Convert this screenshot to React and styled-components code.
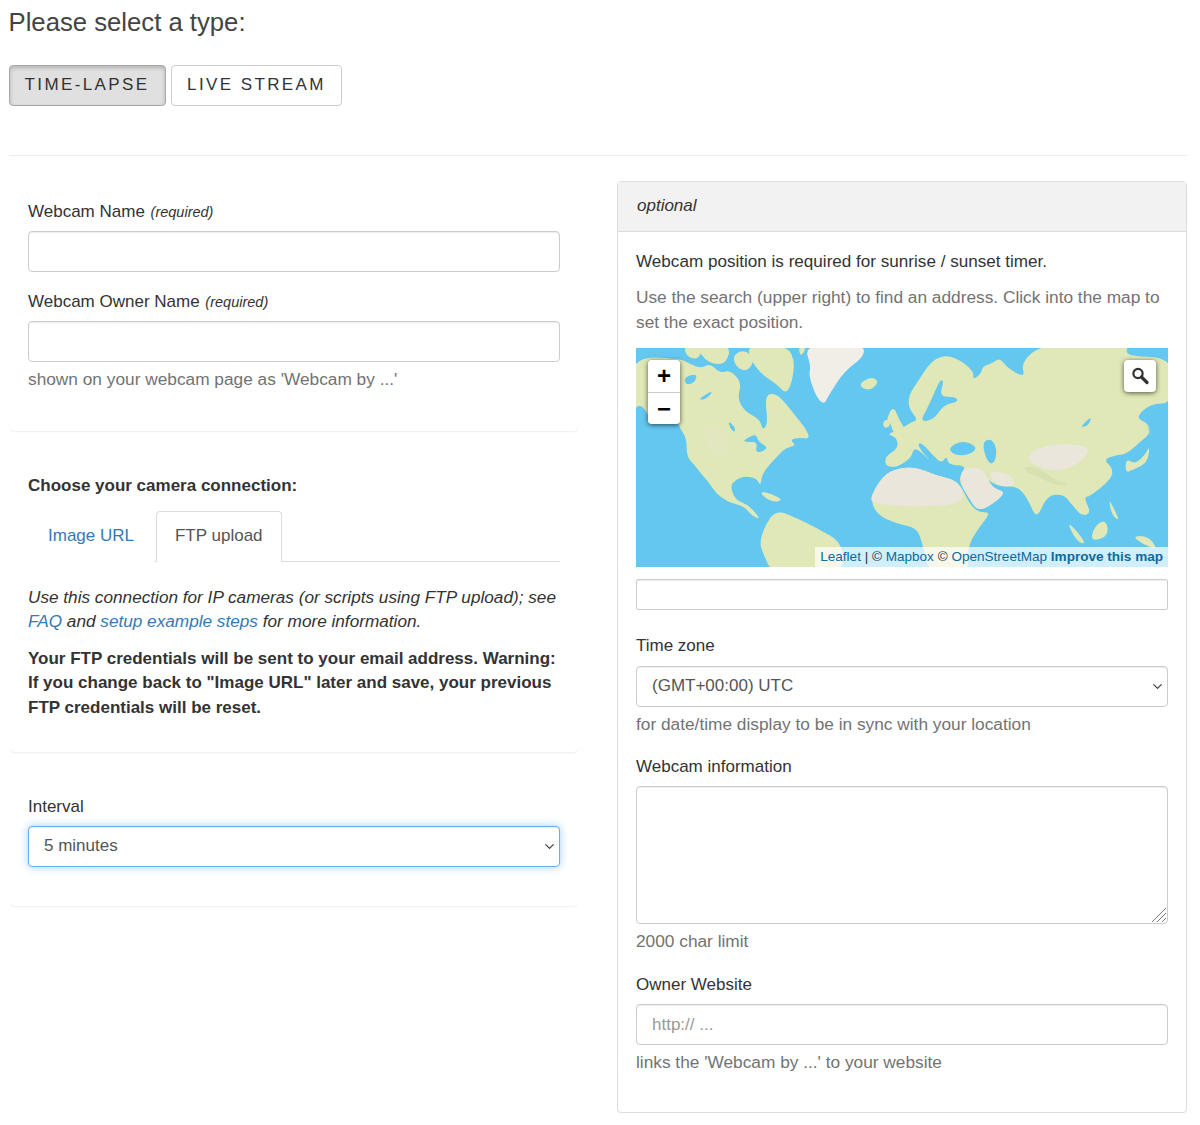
import styled, { createGlobalStyle } from "styled-components";
import { ChevronDown } from "lucide-react";

const GlobalStyle = createGlobalStyle`
  * { box-sizing: border-box; }
  body {
    margin: 0;
    background: #fff;
    color: #333;
    font-family: "Liberation Sans", Arial, sans-serif;
    font-size: 17px;
    line-height: 24px;
  }
`;

const WATER = "#64c7f0";
const LAND = "#dfe8b6";
const SAND = "#ebe6dc";
const ICE = "#f1eee8";

// rounds a traced outline so the coast doesn't look like a polygon
const coast = (outline) => {
  const pts = outline
    .trim()
    .split(/\s+/)
    .map((p) => p.split(",").map(Number));
  const mid = (a, b) => [(a[0] + b[0]) / 2, (a[1] + b[1]) / 2];
  const start = mid(pts[pts.length - 1], pts[0]);
  let d = `M${start[0]} ${start[1]}`;
  pts.forEach((p, i) => {
    const m = mid(p, pts[(i + 1) % pts.length]);
    d += `Q${p[0]} ${p[1]} ${m[0]} ${m[1]}`;
  });
  return d + "Z";
};

const Shape = ({ fill, outlines }) => (
  <path fill={fill} d={outlines.map(coast).join("")} />
);

const WorldMap = () => (
  <MapSvg viewBox="0 0 532 219" preserveAspectRatio="none" aria-hidden="true">
    <rect width="532" height="219" fill={WATER} />
    {/* americas and the atlantic side, traced on the left crop */}
    <g transform="translate(-6 -8) scale(0.3333)">
      <Shape
        fill={LAND}
        outlines={[
          "0,50 150,55 180,72 215,85 240,70 270,100 300,90 335,128 322,175 345,215 390,238 398,272 414,250 404,168 435,158 470,193 500,233 524,260 542,298 505,292 480,300 499,316 465,324 445,347 420,372 395,405 392,439 380,415 345,408 315,420 301,440 315,477 345,492 360,500 394,540 365,527 345,502 320,492 290,484 258,460 238,430 213,400 193,375 170,350 170,295 148,262 146,240 60,240 35,190 0,215",
          "160,18 218,18 207,58 172,52",
          "198,14 305,14 287,74 240,70 213,45",
          "308,45 345,28 375,60 352,95 318,82",
          "348,14 470,14 498,70 474,168 440,132 400,107 368,70",
          "388,600 420,528 450,514 490,530 560,563 640,610 640,705 430,705 398,640",
          "390,454 425,461 460,481 430,486 403,473",
          "768,240 790,196 808,240 828,272 790,282 783,250",
          "758,245 775,236 782,258 763,266",
          "688,130 725,110 747,125 725,150 698,146",
          "505,18 530,22 512,52",
        ]}
      />
      <Shape
        fill={ICE}
        outlines={["522,12 698,12 705,48 642,94 594,170 582,194 558,170 536,105 543,80"]}
      />
      <Shape fill="#e3e7c0" outlines={["225,250 285,262 310,320 270,365 225,320"]} />
      <Shape
        fill={WATER}
        outlines={[
          "162,112 202,100 195,128 168,135",
          "208,176 250,150 235,172 215,180",
          "295,243 314,260 316,278 300,266",
          "336,303 378,280 385,305 418,325 375,342 383,306 355,306",
        ]}
      />
    </g>
    {/* europe, africa and asia, traced on the right crop */}
    <g transform="translate(264 -8) scale(0.3333)">
      <Shape
        fill={LAND}
        outlines={[
          "-90,472 -50,406 -10,386 50,381 110,408 175,421 207,490 237,518 274,516 237,562 202,620 207,705 88,705 68,612 50,562 -10,552 -70,524",
          "-44,349 -5,325 -10,292 -40,282 0,270 30,248 55,240 26,205 26,165 58,118 90,68 130,44 178,58 222,95 218,120 244,100 247,80 280,68 300,54 324,85 376,114 363,66 430,10 690,10 672,50 820,50 820,190 750,191 706,235 746,250 750,282 722,304 680,342 640,347 611,360 639,385 634,417 570,469 551,472 574,519 545,529 513,490 490,462 440,467 410,540 383,475 350,437 300,442 252,413 285,448 316,455 290,484 235,516 205,472 175,421 190,395 195,377 145,374 140,347 125,370 100,347 65,308 50,314 94,368 72,344 42,321 34,354 -10,382 -44,379",
          "678,355 705,373 737,343 750,316 742,369 700,389 676,399",
          "736,246 758,298 745,264",
          "626,476 644,510 659,544 635,524",
          "571,594 590,551 619,541 626,584 590,602",
          "501,546 530,571 559,614 530,604",
          "696,588 745,588 774,629 730,614",
        ]}
      />
      <Shape
        fill={SAND}
        outlines={[
          "-90,472 -50,406 -10,386 50,381 110,408 175,421 200,490 60,502 -80,492",
          "190,380 250,385 262,418 285,448 316,455 290,484 235,516 205,472 178,421",
          "270,390 335,405 348,437 300,440 272,415",
          "385,335 470,310 578,318 540,372 460,397 385,368",
        ]}
      />
      <Shape fill="#d6e0b0" outlines={["372,378 420,385 470,425 512,432 470,438 420,412 380,397"]} />
      <Shape
        fill={WATER}
        outlines={[
          "60,245 82,205 100,165 120,120 132,122 118,170 165,170 176,184 130,196 100,240",
          "538,264 577,226 565,257",
          "143,324 190,300 234,322 210,344 165,347",
          "246,305 275,296 292,330 282,374 260,364",
        ]}
      />
    </g>
  </MapSvg>
);

const App = () => (
  <Page>
    <GlobalStyle />
    <Title>Please select a type:</Title>
    <TypeRow>
      <TypeButton $active>Time-lapse</TypeButton>
      <TypeButton>Live stream</TypeButton>
    </TypeRow>
    <Rule />
    <Columns>
      <div>
        <Section $bottom={40}>
          <Label>
            Webcam Name <Small>(required)</Small>
          </Label>
          <Input />
          <Label $top={17}>
            Webcam Owner Name <Small>(required)</Small>
          </Label>
          <Input />
          <Help>shown on your webcam page as 'Webcam by ...'</Help>
        </Section>

        <Section $bottom={32}>
          <Heading>Choose your camera connection:</Heading>
          <Tabs>
            <Tab>Image URL</Tab>
            <Tab $active>FTP upload</Tab>
          </Tabs>
          <Note>
            Use this connection for IP cameras (or scripts using FTP upload);
            see <Link href="#">FAQ</Link> and{" "}
            <Link href="#">setup example steps</Link> for more information.
          </Note>
          <Warning>
            Your FTP credentials will be sent to your email address. Warning:
            If you change back to "Image URL" later and save, your previous FTP
            credentials will be reset.
          </Warning>
        </Section>

        <Section $top={41} $bottom={39}>
          <Label>Interval</Label>
          <SelectWrap>
            <Select $focused defaultValue="5">
              <option value="5">5 minutes</option>
              <option value="10">10 minutes</option>
            </Select>
            <Chevron size={15} strokeWidth={2} />
          </SelectWrap>
        </Section>
      </div>

      <Panel>
        <PanelHeader>optional</PanelHeader>
        <PanelBody>
          <Lead>Webcam position is required for sunrise / sunset timer.</Lead>
          <MapHint>
            Use the search (upper right) to find an address. Click into the map
            to set the exact position.
          </MapHint>
          <MapBox>
            <WorldMap />
            <ZoomControl>
              <ZoomButton>+</ZoomButton>
              <ZoomButton>−</ZoomButton>
            </ZoomControl>
            <SearchButton>
              <svg width="20" height="20" viewBox="0 0 20 20" aria-hidden="true">
                <circle cx="8" cy="7.5" r="4.6" fill="none" stroke="#333" strokeWidth="2.2" />
                <path d="M11.5 11l5.5 5.5" stroke="#333" strokeWidth="3.2" strokeLinecap="round" />
              </svg>
            </SearchButton>
            <Attribution>
              <a>Leaflet</a> | © <a>Mapbox</a> © <a>OpenStreetMap</a>{" "}
              <b>Improve this map</b>
            </Attribution>
          </MapBox>
          <PositionInput />
          <Label $top={23} $gap={9}>
            Time zone
          </Label>
          <SelectWrap>
            <Select defaultValue="utc">
              <option value="utc">(GMT+00:00) UTC</option>
            </Select>
            <Chevron size={15} strokeWidth={2} />
          </SelectWrap>
          <Help>for date/time display to be in sync with your location</Help>
          <Label $top={18}>Webcam information</Label>
          <TextWrap>
            <TextArea />
            <Grip width="16" height="16" viewBox="0 0 16 16" aria-hidden="true">
              <path d="M1 15L15 1M6 15L15 6M11 15L15 11" stroke="#777" strokeWidth="1" />
            </Grip>
          </TextWrap>
          <Help>2000 char limit</Help>
          <Label $top={19}>Owner Website</Label>
          <Input placeholder="http:// ..." />
          <Help>links the 'Webcam by ...' to your website</Help>
        </PanelBody>
      </Panel>
    </Columns>
  </Page>
);

const Page = styled.div`
  width: 1200px;
  padding: 10px 13px 0 9px;
`;

const Title = styled.div`
  margin-left: -0.5px;
  font-size: 25.7px;
  line-height: 24px;
  color: #444;
`;

const TypeRow = styled.div`
  display: flex;
  gap: 5.5px;
  margin: 31px 0 0 -0.5px;
`;

const TypeButton = styled.button`
  height: 41px;
  padding: 0 15px 2px;
  border-radius: 4px;
  border: 1px solid ${(p) => (p.$active ? "#a8a8a8" : "#ccc")};
  background: ${(p) => (p.$active ? "#e0e0e0" : "#fff")};
  box-shadow: ${(p) => (p.$active ? "inset 0 2px 4px rgba(0,0,0,0.2)" : "none")};
  color: #333;
  font-family: inherit;
  font-size: 17px;
  letter-spacing: 2.4px;
  text-transform: uppercase;
`;

const Rule = styled.div`
  height: 1px;
  margin-top: 49px;
  background: #eee;
`;

const Columns = styled.div`
  display: grid;
  grid-template-columns: 570px 570px;
  gap: 38px;
  align-items: start;
  margin-top: 1px;
`;

const Section = styled.section`
  padding: ${(p) => p.$top || 42}px 19px ${(p) => p.$bottom}px;
  border-bottom: 1px solid #f1f1f1;
  border-radius: 0 0 6px 6px;
  box-shadow: 0 1px 1px rgba(0, 0, 0, 0.02);
`;

const Label = styled.label`
  display: block;
  margin-top: ${(p) => p.$top || 0}px;
  margin-bottom: ${(p) => (p.$gap || 8) - 2}px;
  color: #333;
  line-height: 26px;
`;

const Small = styled.em`
  margin-left: 1px;
  font-size: 14.5px;
`;

const Input = styled.input`
  display: block;
  width: 100%;
  height: 41px;
  padding: 0 15px;
  border: 1px solid #ccc;
  border-radius: 4px;
  box-shadow: inset 0 1px 1px rgba(0, 0, 0, 0.075);
  background: #fff;
  font-family: inherit;
  font-size: 17px;
  color: #555;

  &::placeholder {
    color: #999;
  }
`;

const PositionInput = styled(Input)`
  height: 31px;
  margin-top: 12px;
  border-radius: 2px;
`;

const Help = styled.div`
  margin-top: 5px;
  color: #737373;
  font-size: 17.3px;
`;

const Heading = styled.div`
  margin-bottom: 13px;
  font-weight: 700;
`;

const Tabs = styled.div`
  display: flex;
  height: 51px;
  border-bottom: 1px solid #ddd;
`;

const Tab = styled.div`
  height: 51px;
  padding: 0 ${(p) => (p.$active ? 18 : 19)}px;
  margin-right: ${(p) => (p.$active ? 0 : 2)}px;
  border: 1px solid ${(p) => (p.$active ? "#ddd" : "transparent")};
  border-bottom-color: ${(p) => (p.$active ? "#fff" : "transparent")};
  border-radius: 4px 4px 0 0;
  background: #fff;
  color: ${(p) => (p.$active ? "#555" : "#337ab7")};
  line-height: 47px;
`;

const Note = styled.p`
  margin: 23px 0 0;
  font-size: 17.2px;
  font-style: italic;
  line-height: 24px;
  color: #333;
`;

const Link = styled.a`
  color: #337ab7;
  text-decoration: none;
`;

const Warning = styled.p`
  margin: 13.75px 0 0;
  font-weight: 700;
  line-height: 24.5px;
`;

const SelectWrap = styled.div`
  position: relative;
`;

const Select = styled.select`
  display: block;
  width: 100%;
  height: 41px;
  padding: 0 15px 2px;
  appearance: none;
  background: #fff;
  border: 1px solid ${(p) => (p.$focused ? "#66afe9" : "#ccc")};
  border-radius: 4px;
  box-shadow: ${(p) =>
    p.$focused
      ? "inset 0 1px 1px rgba(0,0,0,0.075), 0 0 8px rgba(102,175,233,0.6)"
      : "inset 0 1px 1px rgba(0,0,0,0.075)"};
  color: #555;
  font-family: inherit;
  font-size: 17px;
`;

const Chevron = styled(ChevronDown)`
  position: absolute;
  top: 13px;
  right: 3px;
  color: #444;
  pointer-events: none;
`;

const Panel = styled.div`
  margin-top: 24px;
  border: 1px solid #ddd;
  border-radius: 4px;
  box-shadow: 0 1px 1px rgba(0, 0, 0, 0.05);
`;

const PanelHeader = styled.div`
  height: 50px;
  padding: 0 19px;
  border-bottom: 1px solid #ddd;
  background: #f2f2f2;
  font-style: italic;
  line-height: 47px;
  color: #333;
`;

const PanelBody = styled.div`
  padding: 18px 18px 38px;
`;

const Lead = styled.p`
  margin: 0;
  font-size: 17.1px;
`;

const MapHint = styled.p`
  margin: 11px 0 13px;
  color: #737373;
  font-size: 17.3px;
  line-height: 25px;
`;

const MapBox = styled.div`
  position: relative;
  height: 219px;
  overflow: hidden;
`;

const MapSvg = styled.svg`
  display: block;
  width: 100%;
  height: 100%;
`;

const ZoomControl = styled.div`
  position: absolute;
  top: 12px;
  left: 12px;
  width: 32px;
  border-radius: 4px;
  overflow: hidden;
  box-shadow: 0 1px 5px rgba(0, 0, 0, 0.65);
`;

const ZoomButton = styled.div`
  height: 32px;
  background: #fff;
  color: #000;
  font-family: "Liberation Sans", sans-serif;
  font-size: 24px;
  font-weight: 700;
  line-height: 32px;
  text-align: center;

  & + & {
    border-top: 1px solid #ccc;
  }
`;

const SearchButton = styled.div`
  position: absolute;
  top: 12px;
  right: 12px;
  width: 32px;
  height: 32px;
  display: flex;
  align-items: center;
  justify-content: center;
  background: #fff;
  border-radius: 4px;
  box-shadow: 0 1px 5px rgba(0, 0, 0, 0.65);
`;

const Attribution = styled.div`
  position: absolute;
  right: 0;
  bottom: 0;
  height: 20px;
  padding: 0 5px;
  background: rgba(255, 255, 255, 0.7);
  color: #333;
  font-size: 13.55px;
  line-height: 20px;
  white-space: nowrap;

  a,
  b {
    color: #0b6aa2;
  }
`;

const TextWrap = styled.div`
  position: relative;
`;

const TextArea = styled.textarea`
  display: block;
  width: 100%;
  height: 138px;
  border: 1px solid #ccc;
  border-radius: 4px;
  box-shadow: inset 0 1px 1px rgba(0, 0, 0, 0.075);
  resize: none;
`;

const Grip = styled.svg`
  position: absolute;
  right: 1px;
  bottom: 1px;
  pointer-events: none;
`;

export default App;
